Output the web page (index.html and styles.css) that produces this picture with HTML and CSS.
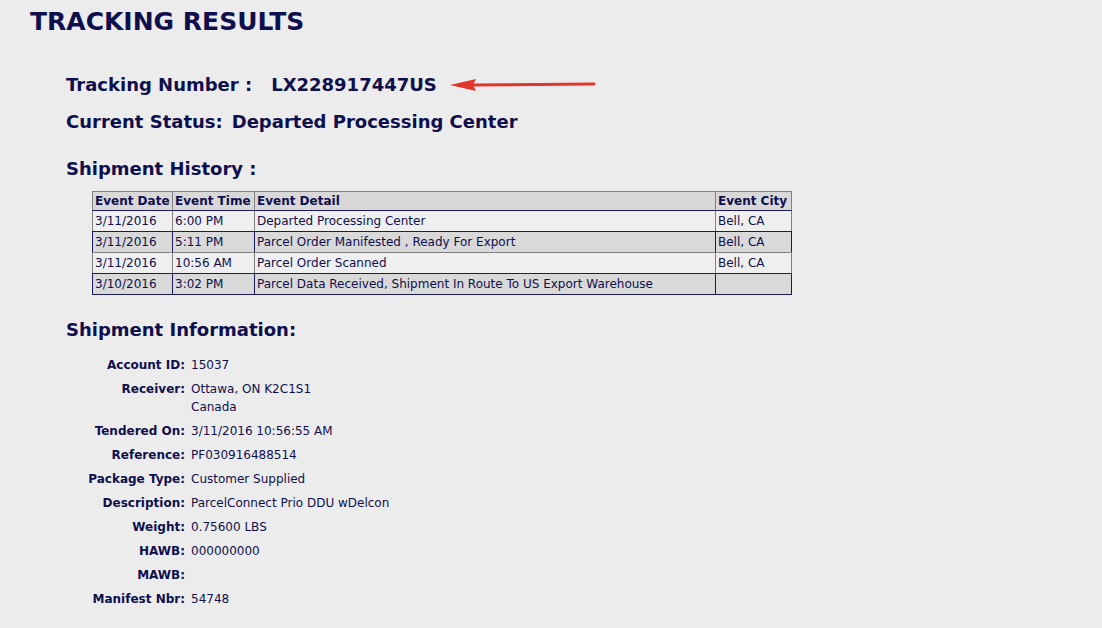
FILE: index.html
```html
<!DOCTYPE html>
<html lang="en">
<head>
    <meta charset="UTF-8">
    <title>Tracking Results</title>
    <link rel="stylesheet" href="styles.css">
</head>
<body>

    <h1 class="page-title">TRACKING RESULTS</h1>

    <!-- Tracking number and status -->
    <div class="summary">
        <div class="summary-line">
            <span class="summary-label">Tracking Number :</span>
            <span class="tracking-number">LX228917447US</span>
            <svg class="arrow" width="146" height="14" viewBox="0 0 146 14">
                <line x1="20" y1="7" x2="144" y2="6" stroke="#e2352b" stroke-width="3" stroke-linecap="round"/>
                <polygon points="0,7 26,1 23,7 26,13" fill="#e2352b"/>
            </svg>
        </div>
        <div class="summary-line">
            <span class="summary-label">Current Status:</span>
            <span class="status-value">Departed Processing Center</span>
        </div>
    </div>

    <h2 class="section-title">Shipment History :</h2>

    <table class="history">
        <tr class="head">
            <th class="col-date">Event Date</th>
            <th class="col-time">Event Time</th>
            <th class="col-detail">Event Detail</th>
            <th class="col-city last">Event City</th>
        </tr>
        <tr class="light first-row">
            <td>3/11/2016</td>
            <td>6:00 PM</td>
            <td>Departed Processing Center</td>
            <td class="last">Bell, CA</td>
        </tr>
        <tr class="dark">
            <td>3/11/2016</td>
            <td>5:11 PM</td>
            <td>Parcel Order Manifested , Ready For Export</td>
            <td class="last">Bell, CA</td>
        </tr>
        <tr class="light">
            <td>3/11/2016</td>
            <td>10:56 AM</td>
            <td>Parcel Order Scanned</td>
            <td class="last">Bell, CA</td>
        </tr>
        <tr class="dark last-row">
            <td>3/10/2016</td>
            <td>3:02 PM</td>
            <td>Parcel Data Received, Shipment In Route To US Export Warehouse</td>
            <td class="last"></td>
        </tr>
    </table>

    <h2 class="section-title info-title">Shipment Information:</h2>

    <dl class="info">
        <dt>Account ID:</dt>
        <dd>15037</dd>
        <dt>Receiver:</dt>
        <dd>Ottawa, ON K2C1S1<br>Canada</dd>
        <dt>Tendered On:</dt>
        <dd>3/11/2016 10:56:55 AM</dd>
        <dt>Reference:</dt>
        <dd>PF030916488514</dd>
        <dt>Package Type:</dt>
        <dd>Customer Supplied</dd>
        <dt>Description:</dt>
        <dd>ParcelConnect Prio DDU wDelcon</dd>
        <dt>Weight:</dt>
        <dd>0.75600 LBS</dd>
        <dt>HAWB:</dt>
        <dd>000000000</dd>
        <dt>MAWB:</dt>
        <dd></dd>
        <dt>Manifest Nbr:</dt>
        <dd>54748</dd>
    </dl>

</body>
</html>
```

FILE: styles.css
```css
body {
    background-color: #ececec;
    color: #0f0f4e;
    font-family: 'DejaVu Sans', Verdana, sans-serif;
    margin: 0;
    padding: 6px 0 0 30px;
}

.page-title {
    font-size: 25px;
    font-weight: bold;
    margin: 0;
    line-height: 32px;
}

/* Номер и статус */
.summary {
    margin: 36px 0 0 36px;
}

.summary-line {
    display: flex;
    align-items: center;
    font-size: 18px;
    font-weight: bold;
    line-height: 22px;
    margin-bottom: 15px;
}

.summary-label {
    margin-right: 19px;
}

.status-value {
    margin-left: -10px;
}

.arrow {
    margin-left: 13px;
}

.section-title {
    font-size: 18px;
    font-weight: bold;
    line-height: 22px;
    margin: 25px 0 0 36px;
}

/* История отправления */
.history {
    border-collapse: separate;
    border-spacing: 0;
    margin: 11px 0 0 62px;
    width: 700px;
    font-size: 12px;
}

.history th,
.history td {
    text-align: left;
    padding: 0 2px;
    height: 20px;
    white-space: nowrap;
    border-top: 1px solid #808080;
    border-left: 1px solid #808080;
}

.history th {
    background-color: #d8d8d8;
    height: 18px;
}

.history .last {
    border-right: 1px solid #808080;
}

.history .light td {
    background-color: #efefef;
}

.history .first-row td {
    border-top-color: #1b1b5c;
}

.history .dark td {
    background-color: #d9d9d9;
    border-color: #1b1b5c;
}

.history .last-row td {
    border-bottom: 1px solid #1b1b5c;
}

.col-date { width: 75px; }
.col-time { width: 77px; }
.col-city { width: 71px; }

/* Информация об отправлении */
.info-title {
    margin-top: 24px;
}

.info {
    display: grid;
    grid-template-columns: 119px 1fr;
    column-gap: 6px;
    row-gap: 6px;
    margin: 15px 0 0 36px;
    font-size: 12px;
    line-height: 18px;
}

.info dt {
    font-weight: bold;
    text-align: right;
}

.info dd {
    margin: 0;
    min-height: 18px;
}
```
